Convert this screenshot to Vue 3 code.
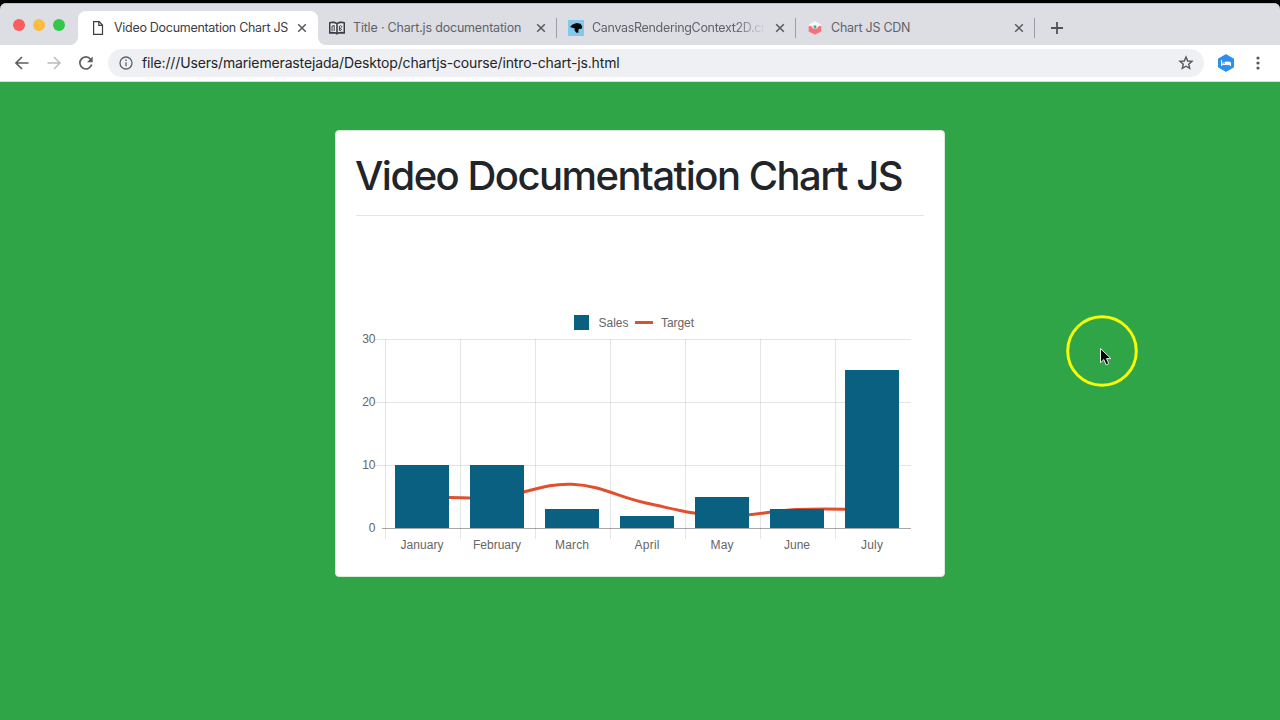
<script setup>
const months = ['January', 'February', 'March', 'April', 'May', 'June', 'July']
const sales = [10, 10, 3, 2, 5, 3, 25]
const target = [5, 5, 7, 4, 2, 3, 3]
const labelWidths = [43, 48, 34, 25, 23, 26, 22]

const step = 75
const left = 29.5
const base = 228.5
const unit = 189.5 / 30
const cx = (i) => 66 + i * step
const cy = (v) => base - v * unit
const barTop = (v) => Math.round(cy(v) - 0.1)

const bars = sales.map((v, i) => ({ x: cx(i) - 27, y: barTop(v), h: 228 - barTop(v) }))
const ticks = [30, 20, 10, 0].map((v) => ({ v, y: Math.floor(cy(v)) + 0.5 }))

function spline(values, tension = 0.4) {
  const pts = values.map((v, i) => ({ x: cx(i), y: cy(v) }))
  const ctrl = pts.map((p, i) => {
    const a = pts[i - 1] || p
    const b = pts[i + 1] || p
    const d1 = Math.hypot(p.x - a.x, p.y - a.y)
    const d2 = Math.hypot(b.x - p.x, b.y - p.y)
    const fa = (tension * d1) / (d1 + d2)
    const fb = (tension * d2) / (d1 + d2)
    return {
      px: p.x - fa * (b.x - a.x), py: p.y - fa * (b.y - a.y),
      nx: p.x + fb * (b.x - a.x), ny: p.y + fb * (b.y - a.y),
    }
  })
  let d = `M${pts[0].x},${pts[0].y}`
  for (let i = 1; i < pts.length; i++) {
    d += ` C${ctrl[i - 1].nx},${ctrl[i - 1].ny} ${ctrl[i].px},${ctrl[i].py} ${pts[i].x},${pts[i].y}`
  }
  return d
}
const linePath = spline(target)
</script>

<template>
  <div class="screen">
    <header class="tabstrip">
      <div class="lights"><i class="red"></i><i class="amber"></i><i class="green"></i></div>

      <div class="tab active">
        <svg class="fav" width="16" height="16" viewBox="0 0 16 16" fill="none" stroke="#3c4043" stroke-width="1.2">
          <path d="M3.6 1.6h5.6l3.3 3.4v9.4H3.6zM8.8 1.6V5.4h3.7" />
        </svg>
        <span class="title t1">Video Documentation Chart JS</span>
        <svg class="close" width="10" height="10" viewBox="0 0 10 10"><path d="M1.2 1.2l7.6 7.6M8.8 1.2L1.2 8.8" /></svg>
        <svg class="foot footl" width="8" height="8" viewBox="0 0 8 8"><path d="M8 0v8H0a8 8 0 0 0 8-8z" fill="#fff" /></svg>
        <svg class="foot footr" width="8" height="8" viewBox="0 0 8 8"><path d="M0 0v8h8a8 8 0 0 1-8-8z" fill="#fff" /></svg>
      </div>

      <div class="tab">
        <svg class="fav" width="16" height="16" viewBox="0 0 16 16">
          <path d="M0 2.2C3 1.2 6 1.4 8 2.8c2-1.4 5-1.6 8-.6v11.6H9.6L8 14.8l-1.6-1H0z" fill="#3a3d42" />
          <path d="M1.5 3.5c2-.6 4-.5 5.700.5v8.300c-1.600-.7-3.600-.8-5.700-.4zM14.500 3.500c-2-.6-4-.5-5.700.5v8.300c1.600-.7 3.600-.8 5.700-.4z" fill="#eef0f3" />
          <path d="M3 11V6.200l2.200-.8V11M10.400 10.800V6.200c2-1.500 2.900.2 2 1.500l-1.200 1c1.900.1 1.700 1.600-.2 2" fill="none" stroke="#3a3d42" />
        </svg>
        <span class="title t2">Title · Chart.js documentation</span>
        <svg class="close" width="10" height="10" viewBox="0 0 10 10"><path d="M1.2 1.2l7.6 7.6M8.8 1.2L1.2 8.8" /></svg>
      </div>
      <i class="divider"></i>

      <div class="tab">
        <svg class="fav" width="16" height="16" viewBox="0 0 16 16">
          <path d="M0 0h16v16H0z" fill="#83c9ec" />
          <path d="M2 7l2.500-2.600 4-1.400 4 .8 1.800 2.800-.8 2.300-2.400-.2-.8 1.800.4 2-2.500.3L6.400 10l.4-1.400z" fill="#050708" />
        </svg>
        <span class="title t3">CanvasRenderingContext2D.cr</span>
        <svg class="close" width="10" height="10" viewBox="0 0 10 10"><path d="M1.2 1.2l7.6 7.6M8.8 1.2L1.2 8.8" /></svg>
      </div>
      <i class="divider"></i>

      <div class="tab">
        <svg class="fav" width="16" height="16" viewBox="0 0 16 16">
          <path d="M8 1.300L14 4.600v6.800L8 14.800 2 11.400V4.600z" fill="#f8f8f8" />
          <path d="M1.700 6.200l2.200-.5 1.700 2.200L8 9.200l2.400-1.300 1.700-2.200 2.200.5v5.200L8 14.800l-6.300-3.400z" fill="#f57278" />
          <path d="M5 6.200l2.200-.8.8 2.200z" fill="#f5b56c" />
          <path d="M6.500 7L8 4.800 9.800 7 8 9.300z" fill="#4b9ec4" />
        </svg>
        <span class="title t4">Chart JS CDN</span>
        <svg class="close" width="10" height="10" viewBox="0 0 10 10"><path d="M1.2 1.2l7.6 7.6M8.8 1.2L1.2 8.8" /></svg>
      </div>
      <i class="divider"></i>
      <svg class="plus" width="12" height="12" viewBox="0 0 12 12"><path d="M6 0v12M0 6h12" stroke="#505358" stroke-width="1.800" /></svg>
    </header>

    <nav class="toolbar">
      <svg class="back" width="14" height="14" viewBox="0 0 14 14" fill="none" stroke="#5b5e62" stroke-width="1.600"><path d="M13.500 7H1.300M7 1L1 7l6 6" /></svg>
      <svg class="fwd" width="14" height="14" viewBox="0 0 14 14" fill="none" stroke="#babcbe" stroke-width="1.500"><path d="M.5 7h12.200M7 1l6 6-6 6" /></svg>
      <svg class="reload" width="14" height="14" viewBox="0 0 14 14"><path d="M11.600 3.200A6 6 0 1 0 12.700 8.600" fill="none" stroke="#5b5e62" stroke-width="1.700" /><path d="M13.700.5v5.700H8z" fill="#5b5e62" /></svg>
      <div class="omnibox">
        <svg class="info" width="14" height="14" viewBox="0 0 14 14"><circle cx="7" cy="7" r="6" fill="none" stroke="#5f6368" stroke-width="1.300" /><path d="M7 6.200v4M7 3.600v1.400" stroke="#5f6368" stroke-width="1.300" /></svg>
        <span class="url">file:///Users/mariemerastejada/Desktop/chartjs-course/intro-chart-js.html</span>
        <svg class="star" width="16" height="16" viewBox="0 0 16 16"><path d="M8 2l1.700 4 4.300.4-3.300 2.800 1 4.200L8 11.200l-3.700 2.200 1-4.200L2 6.400 6.300 6z" fill="none" stroke="#55585c" stroke-width="1.400" /></svg>
      </div>
      <svg class="ext" width="18" height="18" viewBox="0 0 18 18">
        <path d="M9 .8l7.400 4.100v8.200L9 17.200l-7.400-4.100V4.900z" fill="#2e8fee" stroke="#2e8fee" stroke-width="1.200" stroke-linejoin="round" />
        <path d="M4.600 6v6M4.600 10.600h9.200M13.500 8.500V12M8 8.100h3.900a1.600 1.600 0 0 1 1.600 1.400H8zM5.300 9.100h2" stroke="#fff" stroke-width="1" fill="#fff" />
      </svg>
      <svg class="more" width="4" height="14" viewBox="0 0 4 14" fill="#55585c"><circle cx="2" cy="2" r="1.600" /><circle cx="2" cy="7" r="1.600" /><circle cx="2" cy="12" r="1.600" /></svg>
    </nav>

    <main class="page">
      <section class="card">
        <h1>Video Documentation Chart JS</h1>
        <hr />
        <svg class="chart" width="568" height="284" viewBox="0 0 568 284">
          <g font-size="12">
            <path d="M218 15h15v15h-15z" fill="#0a6080" />
            <text x="242.500" y="27" textLength="30">Sales</text>
            <path d="M279 22.500h18" stroke="#e0502d" stroke-width="3" />
            <text x="305" y="27" textLength="33">Target</text>
          </g>
          <g shape-rendering="crispEdges" stroke="#000" stroke-opacity=".1">
            <path v-for="i in 7" :key="i" :d="`M${left + (i - 1) * step},39V239`" />
            <path v-for="t in ticks" :key="t.v" :d="`M${t.v ? 19 : 26},${t.y}H555`" :stroke-opacity="t.v ? 0.1 : 0.34" />
          </g>
          <path :d="linePath" fill="none" stroke="#e0502d" stroke-width="3" />
          <rect v-for="(b, i) in bars" :key="i" :x="b.x" :y="b.y" width="54" :height="b.h" fill="#0a6080" />
          <g font-size="12">
            <text v-for="t in ticks" :key="t.v" x="19.500" :y="t.y + 3.500" text-anchor="end">{{ t.v }}</text>
            <text v-for="(m, i) in months" :key="m" :x="cx(i)" y="249" text-anchor="middle" :textLength="labelWidths[i]">{{ m }}</text>
          </g>
        </svg>
      </section>
    </main>

    <svg class="pointer" width="74" height="74" viewBox="0 0 74 74">
      <circle cx="37" cy="37" r="34.300" fill="none" stroke="#f7fb08" stroke-width="3" />
      <path d="M35.500 34.500v14.200l3.300-3.100 2.300 5.300 2.700-1.200-2.300-5.100h4.400z" fill="#080808" stroke="#e8f3e9" stroke-width="1" />
    </svg>
  </div>
</template>

<style>
html, body { margin: 0; overflow: hidden; }
</style>

<style scoped>
* { box-sizing: border-box; }
.screen {
  position: relative; width: 1280px; height: 720px; overflow: hidden;
  display: flex; flex-direction: column; background: #000; padding-top: 3px;
  font-family: Inter, "Liberation Sans", sans-serif;
}
svg { display: block; flex: none; }
.tabstrip {
  height: 42px; flex: none; display: flex; align-items: center; padding-top: 8px;
  background: #dcdee4; border-radius: 6px 6px 0 0; box-shadow: inset 0 1px #bfc0c3;
}
.lights { display: flex; gap: 8px; width: 78px; padding: 0 0 6px 13px; }
.lights i { width: 12px; height: 12px; border-radius: 50%; }
.red { background: #fc5c5b; }
.amber { background: #fdbc40; }
.green { background: #34c84a; }
.tab { position: relative; width: 238px; height: 34px; display: flex; align-items: center; padding: 0 10px 0 11px; color: #5f6368; }
.tab.active { width: 240px; background: #fff; border-radius: 8px 8px 0 0; color: #3c4043; padding: 0 11px 0 12px; }
.fav { margin-right: 8px; }
.title { flex: 1; min-width: 0; font-size: 12.5px; line-height: 16px; white-space: nowrap; margin-right: 9px; }
.t1 { letter-spacing: -.29px; }
.t2 { letter-spacing: -.19px; }
.t3 { letter-spacing: -.32px; -webkit-mask-image: linear-gradient(90deg, #000 82%, transparent); mask-image: linear-gradient(90deg, #000 82%, transparent); }
.t4 { letter-spacing: -.25px; }
.close path { stroke: #55585d; stroke-width: 1.5; }
.foot { position: absolute; bottom: 0; }
.footl { left: -8px; }
.footr { right: -8px; }
.divider { width: 1px; height: 20px; background: #9b9ea5; }
.plus { margin-left: 16px; }
.toolbar { height: 37px; flex: none; display: flex; align-items: center; background: #fff; padding-left: 15px; border-bottom: 1px solid #d5e5d8; }
.fwd { margin-left: 18px; }
.reload { margin-left: 18px; }
.omnibox { width: 1096px; height: 28px; margin-left: 15px; border-radius: 14px; background: #eff0f3; display: flex; align-items: center; padding: 0 10px 0 11px; }
.url { flex: 1; margin-left: 9px; font-size: 14px; line-height: 18px; letter-spacing: -.145px; color: #222427; white-space: nowrap; }
.ext { margin-left: 13px; }
.more { margin-left: 21px; }
.page { flex: 1; background: #2fa548; display: flex; justify-content: center; align-items: flex-start; padding-top: 48px; }
.card { width: 610px; height: 447px; background: #fff; border: 1px solid #d8eadb; border-radius: 4px; padding: 21px 20px 19px; }
h1 { margin: 0 0 15px -1px; font-size: 40px; line-height: 48px; font-weight: 500; letter-spacing: -1.51px; color: #212529; white-space: nowrap; }
hr { border: 0; height: 1px; margin: 0 0 84px; background: #e4e5e6; }
.chart { overflow: visible; }
.chart text { font-family: "Liberation Sans", Arial, sans-serif; fill: #666; }
.pointer { position: absolute; left: 1065px; top: 314px; }
</style>
